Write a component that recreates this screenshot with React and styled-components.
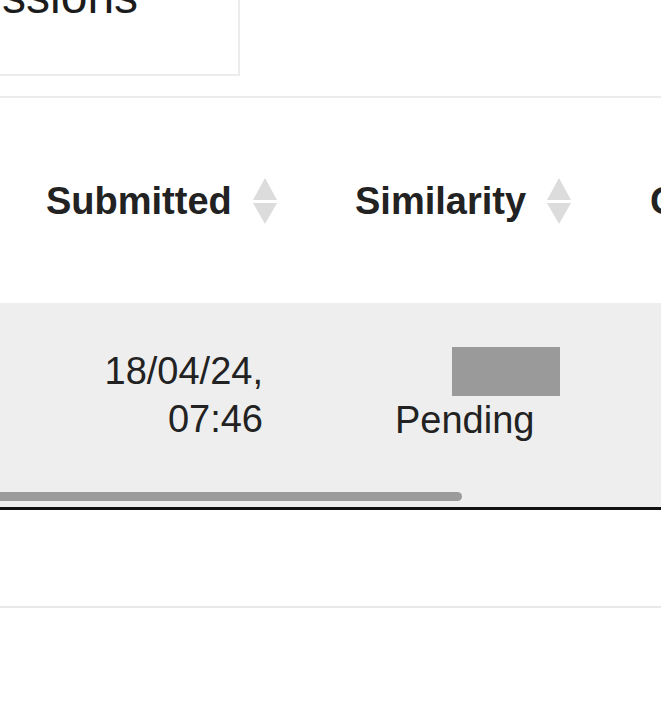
import React from "react";
import styled, { createGlobalStyle } from "styled-components";

const GlobalStyle = createGlobalStyle`
  html, body {
    margin: 0;
    padding: 0;
    background: #ffffff;
    overflow: hidden;
  }
  body {
    font-family: "Liberation Sans", Arial, Helvetica, sans-serif;
    color: #222222;
  }
`;

const Page = styled.div`
  width: 661px;
  height: 716px;
  overflow: hidden;
  background: #fff;
`;

const TitleCard = styled.div`
  display: flow-root;
  width: 238px;
  height: 74px;
  border-right: 2px solid #ececec;
  border-bottom: 2px solid #ececec;
`;

const Title = styled.h2`
  margin: -27px 0 0 -134px;
  font-size: 48px;
  line-height: 48px;
  font-weight: 400;
  color: #1c1c1c;
  white-space: nowrap;
`;

const Divider = styled.hr`
  margin: ${(p) => p.$top}px 0 0;
  border: 0;
  height: 2px;
  background: ${(p) => p.$color || "#ececec"};
`;

const Table = styled.div`
  display: grid;
  grid-template-columns: 310px 310px 220px;
  width: 840px;
`;

const HeadCell = styled.div`
  height: 205px;
  display: flex;
  align-items: center;
  gap: 20px;
  padding-left: ${(p) => p.$pad}px;
  font-size: 38px;
  line-height: 48px;
  font-weight: 700;
  color: #222;
  white-space: nowrap;
`;

const BodyCell = styled.div`
  height: 184px;
  background: #eeeeee;
  display: flex;
  flex-direction: column;
  justify-content: center;
  align-items: ${(p) => p.$align || "flex-start"};
  padding-right: ${(p) => p.$padRight || 0}px;
  font-size: 38px;
  line-height: 48px;
  color: #222;
  text-align: ${(p) => (p.$align === "flex-end" ? "right" : "left")};
`;

const Line = styled.span`
  display: block;
  margin-left: ${(p) => p.$indent || 0}px;
  white-space: nowrap;
`;

const Redacted = styled.div`
  width: 108px;
  height: 49px;
  margin-left: ${(p) => p.$indent}px;
  background: #9a9a9a;
`;

const ScrollTrack = styled.div`
  height: 20px;
  background: #eeeeee;
  padding-top: 5px;
  box-sizing: border-box;
`;

const ScrollThumb = styled.div`
  width: 472px;
  height: 9px;
  border-radius: 5px;
  background: #9b9b9b;
  margin-left: -10px;
`;

const Rule = styled.div`
  height: 3px;
  background: #111111;
`;

const SortIcon = () => (
  <svg width="26" height="46" viewBox="0 0 26 46" aria-hidden="true">
    <polygon points="13,0 25,22 1,22" fill="#dcdcdc" />
    <polygon points="1,25 25,25 13,46" fill="#dcdcdc" />
  </svg>
);

export default function App() {
  return (
    <Page>
      <GlobalStyle />
      <TitleCard>
        <Title>Submissions</Title>
      </TitleCard>
      <Divider $top={20} />
      <Table>
        <HeadCell $pad={46}>
          Submitted
          <SortIcon />
        </HeadCell>
        <HeadCell $pad={45}>
          Similarity
          <SortIcon />
        </HeadCell>
        <HeadCell $pad={30}>Grade</HeadCell>

        <BodyCell $align="flex-end" $padRight={47}>
          <Line>18/04/24,</Line>
          <Line>07:46</Line>
        </BodyCell>
        <BodyCell>
          <Redacted $indent={142} />
          <Line $indent={85}>Pending</Line>
        </BodyCell>
        <BodyCell />
      </Table>
      <ScrollTrack>
        <ScrollThumb />
      </ScrollTrack>
      <Rule />
      <Divider $top={96} $color="#e8e8e8" />
    </Page>
  );
}
